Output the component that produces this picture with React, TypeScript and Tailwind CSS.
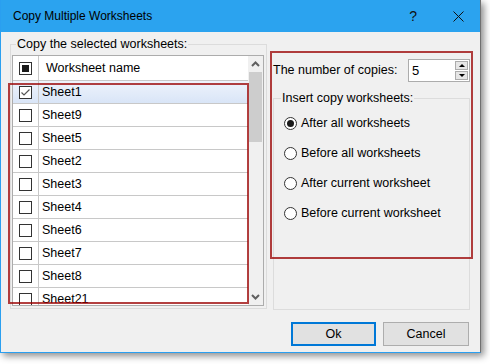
import React from 'react';

const sheets = ['Sheet1', 'Sheet9', 'Sheet5', 'Sheet2', 'Sheet3', 'Sheet4', 'Sheet6', 'Sheet7', 'Sheet8', 'Sheet21'];
const positions = ['After all worksheets', 'Before all worksheets', 'After current worksheet', 'Before current worksheet'];

const Chevron = ({ down }: { down?: boolean }) => (
  <svg width="9" height="6" viewBox="0 0 9 6" className={down ? 'rotate-180' : ''}>
    <path d="M1 5 L4.5 1.5 L8 5" fill="none" stroke="#606060" strokeWidth="2" />
  </svg>
);

const CheckBox = ({ state }: { state?: 'checked' | 'partial' }) => (
  <div className="w-[13px] h-[13px] border border-[#333] bg-white flex items-center justify-center">
    {state === 'partial' && <div className="w-[7px] h-[7px] bg-[#1a1a1a]" />}
    {state === 'checked' && (
      <svg width="11" height="11" viewBox="0 0 11 11">
        <path d="M1.5 5.5 L4 8 L9.5 2.5" fill="none" stroke="#555" strokeWidth="1.2" />
      </svg>
    )}
  </div>
);

const App: React.FC = () => {
  return (
    <div className="min-h-screen bg-white font-['Liberation_Sans',Arial,sans-serif] text-[12.5px] text-black">
      <div className="relative w-[481px] h-[353px] bg-[#f0f0f0] border-l border-b border-r border-l-[#2a9ff0] border-b-[#2a9ff0] border-r-[#707070] shadow-[3px_3px_7px_rgba(0,0,0,0.45)] flex flex-col">
        {/* title bar */}
        <div className="h-[32px] bg-[#2ba3ef] flex items-center pl-[12px] pr-[16px]">
          <span className="text-[12px] text-black">Copy Multiple Worksheets</span>
          <span className="ml-auto text-[14px] text-[#111] mr-[36px]">?</span>
          <svg width="11" height="11" viewBox="0 0 11 11">
            <path d="M0.5 0.5 L10.5 10.5 M10.5 0.5 L0.5 10.5" stroke="#111" strokeWidth="1" />
          </svg>
        </div>

        <div className="flex pl-[9px] pt-[12px]">
          {/* left group */}
          <div className="w-[257px] h-[265px] border border-[#dcdcdc] flex flex-col">
            <div className="-mt-[8px] ml-[5px] w-fit px-[1px] bg-[#f0f0f0] leading-[14px]">Copy the selected worksheets:</div>
            <div className="ml-[1px] mt-[4px] w-[252px] h-[251px] border border-[#acacac] bg-white flex">
              <div className="flex-1 overflow-hidden">
                <div className="h-[25px] border-b border-[#c8c8c8] flex">
                  <div className="w-[26px] border-r border-[#c8c8c8] flex items-center justify-center">
                    <CheckBox state="partial" />
                  </div>
                  <div className="pl-[7px] flex items-center">Worksheet name</div>
                </div>
                {sheets.map((name, i) => (
                  <div
                    key={name}
                    className={`h-[23px] border-b border-[#c8c8c8] flex ${i === 0 ? 'bg-gradient-to-b from-[#eef3fb] to-[#d9e5f7]' : ''}`}
                  >
                    <div className="w-[26px] border-r border-[#c8c8c8] flex items-center justify-center">
                      <CheckBox state={i === 0 ? 'checked' : undefined} />
                    </div>
                    <div className="pl-[3px] flex items-center">{name}</div>
                  </div>
                ))}
              </div>
              <div className="w-[15px] bg-[#f0f0f0] flex flex-col items-center">
                <div className="h-[16px] flex items-center justify-center">
                  <Chevron />
                </div>
                <div className="w-[13px] h-[70px] bg-[#cdcdcd]" />
                <div className="mt-auto h-[16px] flex items-center justify-center">
                  <Chevron down />
                </div>
              </div>
            </div>
          </div>

          {/* right column */}
          <div className="ml-[6px] w-[197px] flex flex-col">
            <div className="mt-[15px] h-[23px] flex items-center">
              <span>The number of copies:</span>
              <div className="ml-auto w-[62px] h-[23px] border border-[#acacac] bg-white flex items-center">
                <span className="pl-[3px] text-[13px]">5</span>
                <div className="ml-auto mr-[1px] w-[13px] h-[19px] flex flex-col gap-[1px]">
                  <div className="flex-1 bg-[#e6e6e6] border border-[#acacac] flex items-center justify-center">
                    <div className="w-0 h-0 border-l-[3px] border-r-[3px] border-b-[3px] border-l-transparent border-r-transparent border-b-black" />
                  </div>
                  <div className="flex-1 bg-[#e6e6e6] border border-[#acacac] flex items-center justify-center">
                    <div className="w-0 h-0 border-l-[3px] border-r-[3px] border-t-[3px] border-l-transparent border-r-transparent border-t-black" />
                  </div>
                </div>
              </div>
            </div>
            <div className="mt-[16px] h-[212px] border border-[#dcdcdc] flex flex-col">
              <div className="-mt-[8px] ml-[7px] w-fit px-[1px] bg-[#f0f0f0] leading-[14px]">Insert copy worksheets:</div>
              <div className="mt-[3px] pl-[10px] flex flex-col">
                {positions.map((label, i) => (
                  <div key={label} className="h-[30px] flex items-center gap-[4px]">
                    <div className="w-[13px] h-[13px] rounded-full border border-[#333] bg-white flex items-center justify-center">
                      {i === 0 && <div className="w-[7px] h-[7px] rounded-full bg-[#1a1a1a]" />}
                    </div>
                    <span>{label}</span>
                  </div>
                ))}
              </div>
            </div>
          </div>
        </div>

        {/* buttons */}
        <div className="mt-[12px] pr-[11px] flex justify-end gap-[7px]">
          <button className="w-[85px] h-[24px] border-2 border-[#0078d7] bg-[#e1e1e1]">Ok</button>
          <button className="w-[86px] h-[24px] border border-[#adadad] bg-[#e1e1e1]">Cancel</button>
        </div>

        {/* annotations */}
        <div className="absolute left-[7px] top-[83px] w-[241px] h-[221px] border-2 border-[#9a0000]/75 pointer-events-none" />
        <div className="absolute left-[269px] top-[51px] w-[203px] h-[208px] border-2 border-[#9a0000]/75 pointer-events-none" />
      </div>
    </div>
  );
};

export default App;
